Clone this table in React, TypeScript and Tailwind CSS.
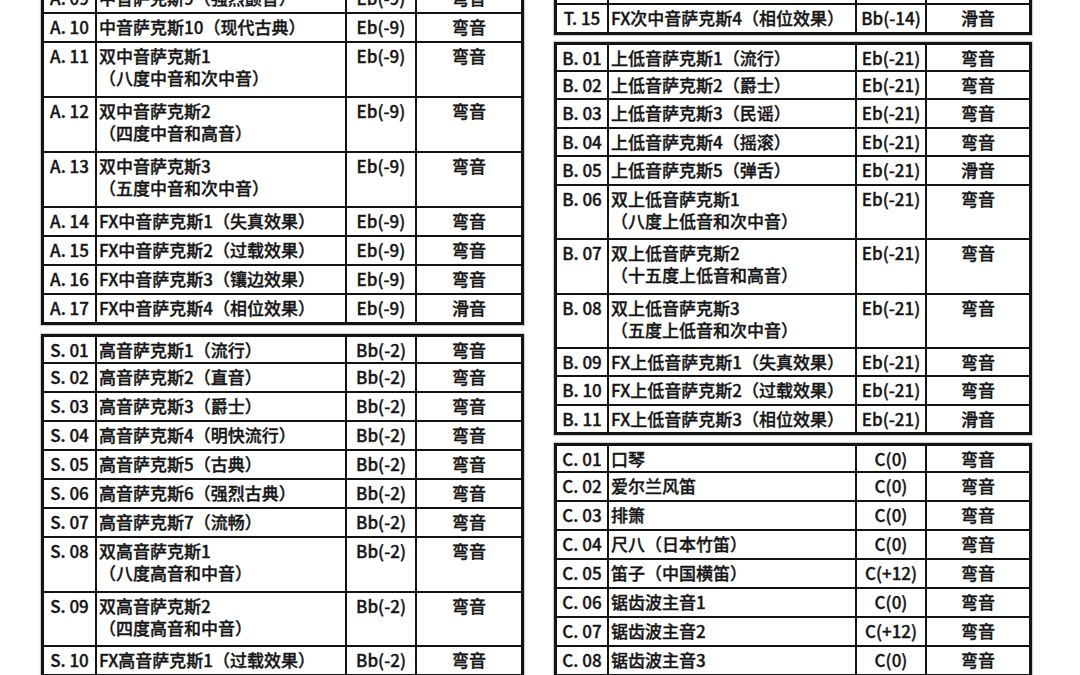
import React from "react";

type Row = { code: string; name: string[]; key: string; type: string; h: number };

const H: Record<number, string> = {
  26: "h-[26px]",
  27: "h-[27px]",
  28: "h-[28px]",
  29: "h-[29px]",
  54: "h-[54px]",
  55: "h-[55px]",
};

const B = "弯音";
const G = "滑音";

const tableA: Row[] = [
  { code: "A. 09", name: ["中音萨克斯9（强烈颤音）"], key: "Eb(-9)", type: B, h: 29 },
  { code: "A. 10", name: ["中音萨克斯10（现代古典）"], key: "Eb(-9)", type: B, h: 29 },
  { code: "A. 11", name: ["双中音萨克斯1", "（八度中音和次中音）"], key: "Eb(-9)", type: B, h: 55 },
  { code: "A. 12", name: ["双中音萨克斯2", "（四度中音和高音）"], key: "Eb(-9)", type: B, h: 55 },
  { code: "A. 13", name: ["双中音萨克斯3", "（五度中音和次中音）"], key: "Eb(-9)", type: B, h: 55 },
  { code: "A. 14", name: ["FX中音萨克斯1（失真效果）"], key: "Eb(-9)", type: B, h: 29 },
  { code: "A. 15", name: ["FX中音萨克斯2（过载效果）"], key: "Eb(-9)", type: B, h: 29 },
  { code: "A. 16", name: ["FX中音萨克斯3（镶边效果）"], key: "Eb(-9)", type: B, h: 29 },
  { code: "A. 17", name: ["FX中音萨克斯4（相位效果）"], key: "Eb(-9)", type: G, h: 27 },
];

const tableS: Row[] = [
  { code: "S. 01", name: ["高音萨克斯1（流行）"], key: "Bb(-2)", type: B, h: 27 },
  { code: "S. 02", name: ["高音萨克斯2（直音）"], key: "Bb(-2)", type: B, h: 29 },
  { code: "S. 03", name: ["高音萨克斯3（爵士）"], key: "Bb(-2)", type: B, h: 29 },
  { code: "S. 04", name: ["高音萨克斯4（明快流行）"], key: "Bb(-2)", type: B, h: 29 },
  { code: "S. 05", name: ["高音萨克斯5（古典）"], key: "Bb(-2)", type: B, h: 29 },
  { code: "S. 06", name: ["高音萨克斯6（强烈古典）"], key: "Bb(-2)", type: B, h: 29 },
  { code: "S. 07", name: ["高音萨克斯7（流畅）"], key: "Bb(-2)", type: B, h: 29 },
  { code: "S. 08", name: ["双高音萨克斯1", "（八度高音和中音）"], key: "Bb(-2)", type: B, h: 55 },
  { code: "S. 09", name: ["双高音萨克斯2", "（四度高音和中音）"], key: "Bb(-2)", type: B, h: 54 },
  { code: "S. 10", name: ["FX高音萨克斯1（过载效果）"], key: "Bb(-2)", type: B, h: 29 },
  { code: "S. 11", name: ["FX高音萨克斯2（相位效果）"], key: "Bb(-2)", type: G, h: 29 },
];

const tableT: Row[] = [
  { code: "T. 14", name: ["FX次中音萨克斯3（镶边效果）"], key: "Bb(-14)", type: B, h: 29 },
  { code: "T. 15", name: ["FX次中音萨克斯4（相位效果）"], key: "Bb(-14)", type: G, h: 27 },
];

const tableB: Row[] = [
  { code: "B. 01", name: ["上低音萨克斯1（流行）"], key: "Eb(-21)", type: B, h: 27 },
  { code: "B. 02", name: ["上低音萨克斯2（爵士）"], key: "Eb(-21)", type: B, h: 28 },
  { code: "B. 03", name: ["上低音萨克斯3（民谣）"], key: "Eb(-21)", type: B, h: 29 },
  { code: "B. 04", name: ["上低音萨克斯4（摇滚）"], key: "Eb(-21)", type: B, h: 28 },
  { code: "B. 05", name: ["上低音萨克斯5（弹舌）"], key: "Eb(-21)", type: G, h: 29 },
  { code: "B. 06", name: ["双上低音萨克斯1", "（八度上低音和次中音）"], key: "Eb(-21)", type: B, h: 54 },
  { code: "B. 07", name: ["双上低音萨克斯2", "（十五度上低音和高音）"], key: "Eb(-21)", type: B, h: 55 },
  { code: "B. 08", name: ["双上低音萨克斯3", "（五度上低音和次中音）"], key: "Eb(-21)", type: B, h: 54 },
  { code: "B. 09", name: ["FX上低音萨克斯1（失真效果）"], key: "Eb(-21)", type: B, h: 28 },
  { code: "B. 10", name: ["FX上低音萨克斯2（过载效果）"], key: "Eb(-21)", type: B, h: 29 },
  { code: "B. 11", name: ["FX上低音萨克斯3（相位效果）"], key: "Eb(-21)", type: G, h: 26 },
];

const tableC: Row[] = [
  { code: "C. 01", name: ["口琴"], key: "C(0)", type: B, h: 27 },
  { code: "C. 02", name: ["爱尔兰风笛"], key: "C(0)", type: B, h: 29 },
  { code: "C. 03", name: ["排箫"], key: "C(0)", type: B, h: 29 },
  { code: "C. 04", name: ["尺八（日本竹笛）"], key: "C(0)", type: B, h: 29 },
  { code: "C. 05", name: ["笛子（中国横笛）"], key: "C(+12)", type: B, h: 29 },
  { code: "C. 06", name: ["锯齿波主音1"], key: "C(0)", type: B, h: 29 },
  { code: "C. 07", name: ["锯齿波主音2"], key: "C(+12)", type: B, h: 29 },
  { code: "C. 08", name: ["锯齿波主音3"], key: "C(0)", type: B, h: 29 },
  { code: "C. 09", name: ["锯齿波主音4"], key: "C(0)", type: B, h: 29 },
];

function Table({ rows, wide }: { rows: Row[]; wide: boolean }) {
  return (
    <div
      className={
        "border-[3px] border-[#141414] bg-white shadow-[0_0_1px_1px_rgba(0,0,0,0.18)] " +
        (wide ? "w-[483px]" : "w-[478px]")
      }
    >
      {rows.map((r, i) => {
        const last = i === rows.length - 1;
        return (
          <div
            key={r.code}
            className={
              "flex leading-[22px] " +
              H[r.h] +
              (last ? "" : " border-b-2 border-[#141414]")
            }
          >
            <div
              className={
                "shrink-0 border-r-2 border-[#141414] pt-[2px] text-center " +
                (wide ? "w-[53px]" : "w-[52px]")
              }
            >
              {r.code}
            </div>
            <div
              className={
                "shrink-0 border-r-2 border-[#141414] pt-[2px] pl-[2px] whitespace-nowrap " +
                (wide ? "w-[250px]" : "w-[248px]")
              }
            >
              {r.name.length > 1 ? (
                <span>
                  {r.name[0]}
                  <br />
                  {r.name[1]}
                </span>
              ) : (
                r.name[0]
              )}
            </div>
            <div className="shrink-0 w-[70px] border-r-2 border-[#141414] pt-[2px] text-center whitespace-nowrap">
              {r.key}
            </div>
            <div className="flex-1 pt-[2px] text-center">{r.type}</div>
          </div>
        );
      })}
    </div>
  );
}

export default function App() {
  return (
    <div className="h-[675px] w-[1080px] overflow-hidden bg-white text-[#151515] text-[17px] font-medium [-webkit-text-stroke:0.35px_#151515] font-['Noto_Sans_CJK_SC','Noto_Sans',sans-serif]">
      <div className="flex items-start gap-[30px] pl-[41px]">
        <div className="flex flex-col gap-[9px] -mt-[18px]">
          <Table rows={tableA} wide={true} />
          <Table rows={tableS} wide={true} />
        </div>
        <div className="flex flex-col -mt-[27px]">
          <Table rows={tableT} wide={false} />
          <div className="h-[7px]" />
          <Table rows={tableB} wide={false} />
          <div className="h-[8px]" />
          <Table rows={tableC} wide={false} />
        </div>
      </div>
    </div>
  );
}
